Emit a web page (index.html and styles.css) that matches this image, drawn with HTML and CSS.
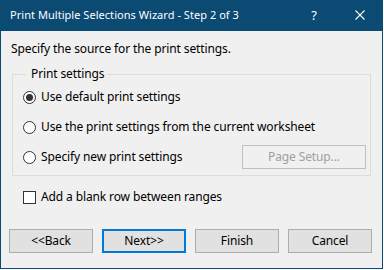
FILE: index.html
```html
<!DOCTYPE html>
<html>
<head>
<meta charset="utf-8">
<link rel="stylesheet" href="styles.css">
</head>
<body>
<div class="window">
  <div class="titlebar">
    <span class="title">Print Multiple Selections Wizard - Step 2 of 3</span>
    <span class="tb-btn help">?</span>
    <span class="tb-btn close">
      <svg width="10" height="10" viewBox="0 0 10 10"><path d="M0.5 0.5 L9.5 9.5 M9.5 0.5 L0.5 9.5" stroke="#fff" stroke-width="1.1" fill="none"/></svg>
    </span>
  </div>
  <div class="content">
    <p class="intro">Specify the source for the print settings.</p>
    <fieldset class="group">
      <legend>Print settings</legend>
      <div class="row"><span class="radio checked"></span><span class="label">Use default print settings</span></div>
      <div class="row"><span class="radio"></span><span class="label">Use the print settings from the current worksheet</span></div>
      <div class="row"><span class="radio"></span><span class="label grow">Specify new print settings</span><span class="btn disabled setup">Page Setup...</span></div>
    </fieldset>
    <div class="row check-row"><span class="checkbox"></span><span class="label">Add a blank row between ranges</span></div>
    <div class="buttons">
      <span class="btn">&lt;&lt;Back</span>
      <span class="btn default">Next&gt;&gt;</span>
      <span class="btn">Finish</span>
      <span class="btn">Cancel</span>
    </div>
  </div>
</div>
</body>
</html>
```

FILE: styles.css
```css
html, body {
  margin: 0;
  padding: 0;
  background: #ffffff;
}
.window {
  box-sizing: border-box;
  width: 383px;
  height: 269px;
  border: 1px solid #0b4a73;
  border-top: none;
  background: #f0f0f0;
  font-family: "Noto Sans", "Liberation Sans", sans-serif;
  font-size: 12px;
  letter-spacing: -0.12px;
  color: #000;
  display: flex;
  flex-direction: column;
}
.titlebar {
  height: 31px;
  background: #0b4a73;
  color: #fff;
  display: flex;
  align-items: center;
  margin: 0 -1px;
  letter-spacing: 0.04px;
}
.title {
  flex: 1;
  padding-left: 10px;
  font-size: 11px;
  line-height: 16px;
  padding-bottom: 1px;
}
.tb-btn {
  width: 46px;
  height: 31px;
  display: flex;
  align-items: center;
  justify-content: center;
}
.help {
  font-size: 13px;
  padding-bottom: 2px;
  box-sizing: border-box;
}
.close svg {
  display: block;
  margin-top: -1px;
}
.content {
  flex: 1;
  display: flex;
  flex-direction: column;
}
.intro {
  margin: 10px 0 0 10px;
  line-height: 16px;
}
.group {
  margin: 9px 11px 0 11px;
  padding: 0 4px 3px 10px;
  border: 1px solid #dcdcdc;
}
.group legend {
  margin-left: 3px;
  padding: 0 2px 0 5px;
  line-height: 16px;
}
.row {
  height: 30px;
  display: flex;
  align-items: center;
}
.label {
  line-height: 16px;
}
.grow {
  flex: 1;
}
.radio {
  box-sizing: border-box;
  width: 13px;
  height: 13px;
  border: 1px solid #333;
  border-radius: 50%;
  background: #fff;
  margin-right: 5px;
  display: flex;
  align-items: center;
  justify-content: center;
}
.radio.checked::after {
  content: "";
  width: 7px;
  height: 7px;
  border-radius: 50%;
  background: #333;
}
.check-row {
  height: 20px;
  margin: 11px 0 0 22px;
}
.checkbox {
  box-sizing: border-box;
  width: 13px;
  height: 13px;
  border: 1px solid #333;
  background: #fff;
  margin-right: 5px;
}
.buttons {
  display: flex;
  gap: 9px;
  margin: 22px 0 0 8px;
}
.btn {
  box-sizing: border-box;
  width: 84px;
  height: 24px;
  border: 1px solid #adadad;
  background: #e1e1e1;
  display: flex;
  align-items: center;
  justify-content: center;
  line-height: 16px;
}
.btn.default {
  border: 2px solid #0078d7;
}
.btn.disabled {
  background: #f0f0f0;
  border-color: #bfbfbf;
  color: #a0a0a0;
}
.setup {
  width: 124px;
}
```
